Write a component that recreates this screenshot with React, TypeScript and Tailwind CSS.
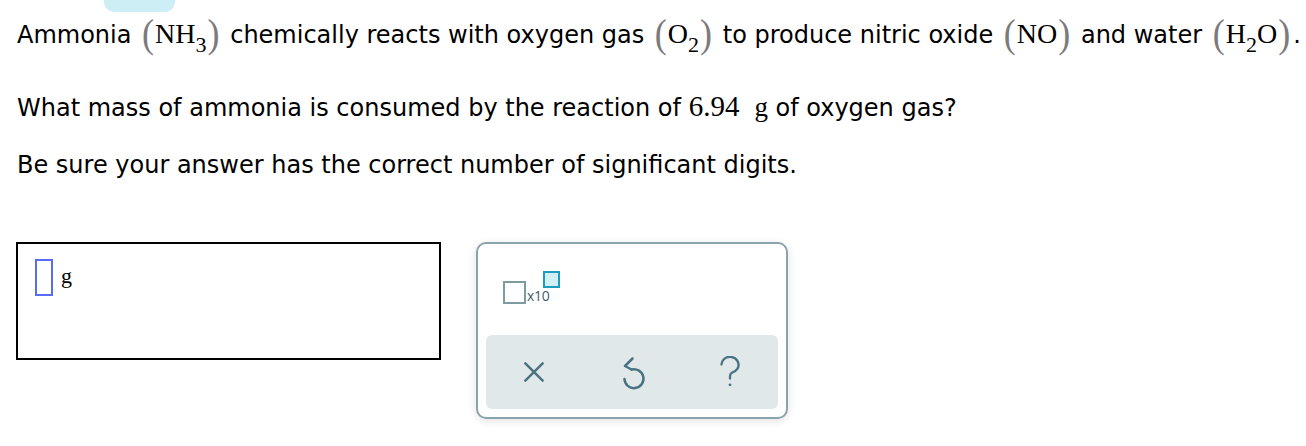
import React from "react";

const P = ({ c }: { c: string }) => (
  <span className="inline-block text-[#7b7b7b] text-[36px] leading-none font-['Liberation_Serif',serif] relative top-[3px] scale-y-110">
    {c}
  </span>
);

const Paren = ({ children }: { children: React.ReactNode }) => (
  <span className="inline-flex items-baseline mx-[3px]">
    <P c="(" />
    <span className="font-['Liberation_Serif',serif] text-[28px] leading-none text-black px-[1px]">{children}</span>
    <P c=")" />
  </span>
);

const Sub = ({ children }: { children: React.ReactNode }) => (
  <span className="inline-block text-[22px] leading-none relative top-[9px]">{children}</span>
);

export default function App() {
  return (
    <div className="relative w-[1306px] h-[446px] bg-white font-['DejaVu_Sans',Verdana,sans-serif] text-black overflow-hidden">
      <div className="absolute left-[104px] top-0 w-[71px] h-[12px] bg-[#cdeef5] rounded-b-[10px]" />
      <div className="pl-[17px] pt-[13px]">
        <p className="text-[24px] leading-[36px] whitespace-nowrap">
          Ammonia{" "}
          <Paren>
            NH<Sub>3</Sub>
          </Paren>{" "}
          chemically reacts with oxygen gas{" "}
          <Paren>
            O<Sub>2</Sub>
          </Paren>{" "}
          to produce nitric oxide <Paren>NO</Paren> and water{" "}
          <Paren>
            H<Sub>2</Sub>O
          </Paren>
          .
        </p>
        <p className="text-[24px] leading-[36px] mt-[35px] whitespace-nowrap">
          What mass of ammonia is consumed by the reaction of{" "}
          <span className="font-['Liberation_Serif',serif] text-[29px]">6.94</span>
          <span className="font-['Liberation_Serif',serif] text-[27px] ml-[15px]">g</span> of oxygen gas?
        </p>
        <p className="text-[24px] leading-[36px] mt-[21px] whitespace-nowrap">
          Be sure your answer has the correct number of significant digits.
        </p>
      </div>
      <div className="flex items-start gap-[35px] pl-[16px] mt-[59px]">
        <div className="w-[425px] h-[118px] border-2 border-black flex items-start pl-[17px] pt-[15px] gap-[8px]">
          <div className="w-[18px] h-[37px] border-2 border-[#5a6cf7]" />
          <span className="font-['Liberation_Serif',serif] text-[22px] leading-none mt-[6px]">g</span>
        </div>
        <div className="w-[312px] h-[177px] border-2 border-[#8ba4ab] rounded-[10px] shadow-[0_2px_8px_rgba(0,0,0,0.12)] px-[8px] pt-[27px] pb-[8px] flex flex-col">
          <div className="flex items-end pl-[17px] h-[33px]">
            <div className="w-[23px] h-[23px] border-2 border-[#7e9aa2]" />
            <span className="font-['Open_Sans',sans-serif] text-[14px] leading-none text-[#3f5b66] ml-[1px] mb-[1px] tracking-[-0.3px]">x10</span>
            <div className="w-[17px] h-[17px] border-2 border-[#1c9dbd] bg-[#d0eff6] self-start ml-[-6px]" />
          </div>
          <div className="mt-auto h-[74px] bg-[#e1e8ea] rounded-[6px] flex items-center justify-around px-[2px]">
            <svg width="26" height="26" viewBox="0 0 24 24" fill="none" stroke="#4a7381" strokeWidth="2.3" strokeLinecap="round">
              <path d="M4 4 L20 20 M20 4 L4 20" />
            </svg>
            <svg width="40" height="38" viewBox="0 0 40 38" fill="none" stroke="#4a7381" strokeWidth="2.5" strokeLinecap="round" strokeLinejoin="round" className="relative top-[2px]">
              <path d="M20.5 3.5 L13 11 L19.5 14.5" />
              <path d="M19.5 14.5 A9.5 9.5 0 1 1 12.5 24" />
            </svg>
            <svg width="26" height="32" viewBox="0 0 22 30" fill="none" stroke="#4a7381" strokeWidth="2.2" strokeLinecap="round">
              <path d="M3 8 A8 7.5 0 1 1 13 15.5 C11.5 16.3 11 17 11 19 V21" />
              <circle cx="11" cy="27" r="1.3" fill="#4a7381" stroke="none" />
            </svg>
          </div>
        </div>
      </div>
    </div>
  );
}
